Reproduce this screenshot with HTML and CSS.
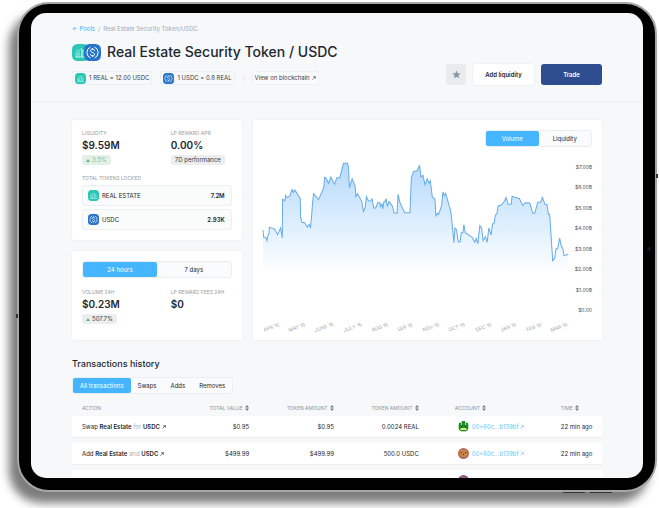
FILE: index.html
```
<!DOCTYPE html>
<html lang="en">
<head>
<meta charset="utf-8">
<title>Real Estate Security Token / USDC</title>
<link rel="stylesheet" href="styles.css">
</head>
<body>

<svg class="sprite" aria-hidden="true">
	<symbol id="real" viewBox="0 0 34 34">
		<rect width="34" height="34" rx="11" fill="#2cc7b4"/>
		<path d="M8 26V18h4v8zM14 26V13l5-4v17zM21 26V12l4 3v11zM6 26h22M7 16l6-6" fill="none" stroke="#b4f7ea" stroke-width="1.4"/>
	</symbol>
	<symbol id="usdc" viewBox="0 0 34 34">
		<rect width="34" height="34" rx="11" fill="#2775ca"/>
		<path d="M13 6a12 12 0 0 0 0 22M21 6a12 12 0 0 1 0 22" fill="none" stroke="#fff" stroke-width="2"/>
		<path d="M21 14c0-5-8-5-8-1 0 5 8 3 8 8 0 4-8 4-8-1M17 8v3M17 23v3" fill="none" stroke="#fff" stroke-width="2"/>
	</symbol>
	<symbol id="sort" viewBox="0 0 8 12">
		<path d="M4 0l4 5H0zM4 12L0 7h8z" fill="#777d84"/>
	</symbol>
	<symbol id="out" viewBox="0 0 10 10">
		<path d="M1 9l7-7M3 1.500h5.500V7" fill="none" stroke="currentColor" stroke-width="1.600"/>
	</symbol>
</svg>

<div class="tablet">
<div class="screen">

	<header class="header">
		<div>
			<nav class="breadcrumb"><a href="#">← Pools</a><span>/</span><span>Real Estate Security Token/USDC</span></nav>
			<div class="title">
				<span class="pair"><svg><use href="#real"/></svg><svg><use href="#usdc"/></svg></span>
				<h1>Real Estate Security Token / USDC</h1>
			</div>
			<div class="chips">
				<span class="chip"><svg class="coin"><use href="#real"/></svg>1 REAL = 12.00 USDC</span>
				<span class="chip"><svg class="coin"><use href="#usdc"/></svg>1 USDC = 0.8 REAL</span>
				<span class="divider"></span>
				<a class="chip chip-link" href="#">View on blockchain <svg class="out"><use href="#out"/></svg></a>
			</div>
		</div>
		<div class="actions">
			<button class="btn btn-star" aria-label="Favourite"><svg viewBox="0 0 20 20"><path d="M10 1l2.700 6 6.500.700-4.900 4.300 1.400 6.500L10 15.200l-5.700 3.300L5.700 12 .8 7.700 7.300 7z" fill="#8e969d"/></svg></button>
			<button class="btn btn-light">Add liquidity</button>
			<button class="btn btn-primary">Trade</button>
		</div>
	</header>

	<main class="content">
		<div class="overview">
			<section class="card">
				<div class="stats">
					<div>
						<h3 class="label">LIQUIDITY</h3>
						<p class="value">$9.59M</p>
						<span class="badge badge-up"><i class="up"></i>3.5%</span>
					</div>
					<div>
						<h3 class="label">LP REWARD APR</h3>
						<p class="value">0.00%</p>
						<span class="badge">7D performance</span>
					</div>
				</div>
				<h3 class="label label-locked">TOTAL TOKENS LOCKED</h3>
				<ul class="tokens">
					<li><svg class="coin"><use href="#real"/></svg>REAL ESTATE<b>7.2M</b></li>
					<li><svg class="coin"><use href="#usdc"/></svg>USDC<b>2.93K</b></li>
				</ul>
			</section>

			<section class="card">
				<div class="tabs">
					<button class="active">24 hours</button>
					<button>7 days</button>
				</div>
				<div class="stats stats-period">
					<div>
						<h3 class="label">VOLUME 24H</h3>
						<p class="value">$0.23M</p>
						<span class="badge"><i class="up"></i>507.7%</span>
					</div>
					<div>
						<h3 class="label">LP REWARD FEES 24H</h3>
						<p class="value">$0</p>
					</div>
				</div>
			</section>

			<section class="card chart">
				<div class="tabs">
					<button class="active">Volume</button>
					<button>Liquidity</button>
				</div>
				<div class="plot">
					<svg viewBox="0 0 918 459" preserveAspectRatio="none">
						<defs>
							<linearGradient id="fill" gradientUnits="userSpaceOnUse" x1="0" y1="0" x2="0" y2="340">
								<stop offset="0" stop-color="#b3d9fc"/>
								<stop offset="1" stop-color="#b3d9fc" stop-opacity="0"/>
							</linearGradient>
						</defs>
						<path fill="url(#fill)" d="M0 210L2 232H8L12 242L15 225L18 222L19 202L34 207L44 224L53 203L58 234L59 118L66 122L68 106L72 113L81 108L87 89L91 97L96 90L112 116L113 172L117 187L125 188L134 202L139 193L143 202L146 170L149 130L152 101L167 119L183 82L185 52L189 53L197 70L204 51L215 73L222 53H231L242 10H254L257 22L260 83L268 56L277 78L279 109L284 101L297 124L302 154L307 144L311 110L317 123L324 122L328 117L333 144H339L345 128L352 129L353 140L358 132L360 147L364 124H368L370 116L374 140L379 125L389 138L394 159H403L406 103L412 129L426 158H442L446 53L453 34H462L471 17L475 51L481 46L487 74L494 56L499 70L503 62L509 111L517 118L520 168L525 160L528 163L537 137L541 96L545 107L549 100L564 152L566 165L574 248L577 204L582 210L587 245H593L596 218H601L604 194L608 218L628 231L637 247L641 235L646 251L652 197L657 204L662 242L669 230L674 247L679 204L686 225L690 192L695 188L699 165L703 162L707 138L715 136L724 126L731 113L737 133H746L749 109L771 116L781 137L788 128L802 129L811 160H817L826 127H835L840 112L848 133L854 134L858 163H862L865 210L871 302L877 295L881 266H886L892 234L897 260L901 264L905 287L918 283V459H0z"/>
						<path class="line" d="M0 210L2 232H8L12 242L15 225L18 222L19 202L34 207L44 224L53 203L58 234L59 118L66 122L68 106L72 113L81 108L87 89L91 97L96 90L112 116L113 172L117 187L125 188L134 202L139 193L143 202L146 170L149 130L152 101L167 119L183 82L185 52L189 53L197 70L204 51L215 73L222 53H231L242 10H254L257 22L260 83L268 56L277 78L279 109L284 101L297 124L302 154L307 144L311 110L317 123L324 122L328 117L333 144H339L345 128L352 129L353 140L358 132L360 147L364 124H368L370 116L374 140L379 125L389 138L394 159H403L406 103L412 129L426 158H442L446 53L453 34H462L471 17L475 51L481 46L487 74L494 56L499 70L503 62L509 111L517 118L520 168L525 160L528 163L537 137L541 96L545 107L549 100L564 152L566 165L574 248L577 204L582 210L587 245H593L596 218H601L604 194L608 218L628 231L637 247L641 235L646 251L652 197L657 204L662 242L669 230L674 247L679 204L686 225L690 192L695 188L699 165L703 162L707 138L715 136L724 126L731 113L737 133H746L749 109L771 116L781 137L788 128L802 129L811 160H817L826 127H835L840 112L848 133L854 134L858 163H862L865 210L871 302L877 295L881 266H886L892 234L897 260L901 264L905 287L918 283"/>
					</svg>
					<div class="axis-y">
						<span>$7.00B</span><span>$6.00B</span><span>$5.00B</span><span>$4.00B</span>
						<span>$3.00B</span><span>$2.00B</span><span>$1.00B</span><span>$0.00</span>
					</div>
					<div class="axis-x">
						<span>APR 16</span><span>MAY 16</span><span>JUNE 16</span><span>JULY 16</span>
						<span>AUG 16</span><span>SEP 16</span><span>NOV 16</span><span>OCT 16</span>
						<span>DEC 16</span><span>JAN 16</span><span>FEB 16</span><span>MAR 16</span>
					</div>
				</div>
			</section>
		</div>

		<h2>Transactions history</h2>
		<div class="tabs tabs-filter">
			<button class="active">All transactions</button>
			<button>Swaps</button>
			<button>Adds</button>
			<button>Removes</button>
		</div>

		<table class="history">
			<thead>
				<tr>
					<th class="action">ACTION</th>
					<th class="total num">TOTAL VALUE <svg class="sort"><use href="#sort"/></svg></th>
					<th class="amount num">TOKEN AMOUNT <svg class="sort"><use href="#sort"/></svg></th>
					<th class="amount num">TOKEN AMOUNT <svg class="sort"><use href="#sort"/></svg></th>
					<th class="account">ACCOUNT <svg class="sort"><use href="#sort"/></svg></th>
					<th class="time">TIME <svg class="sort"><use href="#sort"/></svg></th>
				</tr>
			</thead>
			<tbody>
				<tr>
					<td class="action">Swap <b>Real Estate</b> <em>for</em> <b>USDC</b> <svg class="out"><use href="#out"/></svg></td>
					<td class="num">$0.95</td>
					<td class="num">$0.95</td>
					<td class="num">0.0024 REAL</td>
					<td class="account"><div class="wallet">
						<svg class="avatar" viewBox="0 0 11 11"><circle cx="5.500" cy="5.500" r="5.500" fill="#a9d8a6"/><path d="M1 2h2v2h1V0h3v4h1V2h2v7H9v1H2V9H1z" fill="#218a2c"/><path d="M3 5h1v1H3zM7 5h1v1H7z" fill="#0a3b10"/><path d="M3 7h5v1h1v1H2V8h1z" fill="#dcea7a"/></svg>
						<a href="#">00x60c...b139bf <svg class="out"><use href="#out"/></svg></a>
					</div></td>
					<td class="time">22 min ago</td>
				</tr>
				<tr>
					<td class="action">Add <b>Real Estate</b> <em>and</em> <b>USDC</b> <svg class="out"><use href="#out"/></svg></td>
					<td class="num">$499.99</td>
					<td class="num">$499.99</td>
					<td class="num">500.0 USDC</td>
					<td class="account"><div class="wallet">
						<svg class="avatar" viewBox="0 0 11 11"><circle cx="5.500" cy="5.500" r="5.500" fill="#b5685c"/><path d="M2 2h7v6H8v1H3V8H2z" fill="#c98443"/><path d="M3 4h1v1H3zM7 4h1v1H7zM5 6h1v1H5z" fill="#4b2a1c"/></svg>
						<a href="#">00x60c...b139bf <svg class="out"><use href="#out"/></svg></a>
					</div></td>
					<td class="time">22 min ago</td>
				</tr>
				<tr>
					<td class="action"></td>
					<td></td>
					<td></td>
					<td></td>
					<td class="account"><div class="wallet">
						<svg class="avatar" viewBox="0 0 11 11"><circle cx="5.500" cy="5.500" r="5.500" fill="#6a5fa8"/><path d="M3 1h5v3H3z" fill="#b5544c"/></svg>
					</div></td>
					<td class="time"></td>
				</tr>
			</tbody>
		</table>
	</main>

</div>
<i class="camera"></i>
<i class="port port-left"></i>
<i class="port port-right"></i>
<i class="key key-one"></i>
<i class="key key-two"></i>
</div>

</body>
</html>
```
FILE: styles.css
```
* {
	box-sizing: border-box;
}

body {
	margin: 0;
	padding: 2px 2px 16px 17px;
	height: 100vh;
	overflow: hidden;
	background: #fff;
	color: #23272e;
	font: 6px/8px Inter, "Liberation Sans", sans-serif;
}

h1, h2, h3, p, ul {
	margin: 0;
	padding: 0;
}

a {
	color: #47b5f5;
	text-decoration: none;
}

b {
	font-weight: 600;
}

button {
	margin: 0;
	padding: 0;
	border: 0;
	background: none;
	color: inherit;
	font: inherit;
}

.sprite {
	display: none;
}

/* Tablet frame */

.tablet {
	position: relative;
	height: 100%;
	padding: 9px 12px 12px;
	border: 2px solid #a6a6a6;
	border-radius: 32px;
	background: #000;
	box-shadow: -8px 11px 10px #7c7c7c;
}

.screen {
	height: 100%;
	overflow: hidden;
	border-radius: 15px;
	background: #f6f8fa;
}

.camera {
	position: absolute;
	right: 4px;
	top: 50%;
	width: 4px;
	height: 4px;
	border-radius: 50%;
	background: #15181b;
}

.port {
	position: absolute;
	width: 2px;
	height: 4px;
	background: #333;
}

.port-left {
	left: -3px;
	bottom: 172px;
}

.port-right {
	right: -3px;
	top: 170px;
}

.key {
	position: absolute;
	bottom: -3px;
	width: 22px;
	height: 1px;
	background: #333;
}

.key-one {
	right: 70px;
}

.key-two {
	right: 43px;
}

/* Header */

.header {
	display: flex;
	justify-content: space-between;
	align-items: flex-end;
	padding: 12px 41px 16px;
	border-bottom: 1px solid #edf0f2;
}

.breadcrumb {
	display: flex;
	gap: 3px;
	color: #a5abb1;
}

.title {
	display: flex;
	align-items: center;
	gap: 6px;
	margin: 10px 0;
}

h1 {
	font-size: 14px;
	font-weight: 500;
	line-height: 18px;
}

.pair {
	display: flex;
}

.pair svg {
	width: 17px;
	height: 17px;
}

.pair svg + svg {
	margin-left: -5px;
}

.chips {
	display: flex;
	align-items: center;
	gap: 8px;
}

.chip {
	display: flex;
	align-items: center;
	gap: 3px;
	height: 14px;
	padding: 0 2px;
	border: 1px solid #edf0f2;
	border-radius: 2px;
	color: #3b4047;
}

.chip-link {
	gap: 2px;
	background: #fafbfc;
}

.coin {
	width: 11px;
	height: 11px;
}

.out {
	width: 4px;
	height: 4px;
}

.divider {
	width: 1px;
	height: 5px;
	background: #e6e9ec;
}

.actions {
	display: flex;
	gap: 7px;
}

.btn {
	width: 61px;
	height: 21px;
	border-radius: 3px;
	font-weight: 600;
}

.btn-star {
	display: flex;
	align-items: center;
	justify-content: center;
	width: 20px;
	background: #e9ecef;
}

.btn-star svg {
	width: 9px;
	height: 9px;
}

.btn-light {
	background: #fff;
	box-shadow: 0 0 2px #dce0e4;
}

.btn-primary {
	background: #2d4d8f;
	color: #fff;
}

/* Cards */

.content {
	padding: 18px 41px 0;
}

.overview {
	display: grid;
	grid-template-columns: 17fr 35fr;
	grid-template-rows: auto 1fr;
	gap: 11px;
}

.card {
	padding: 10px;
	border-radius: 2px;
	background: #fff;
	box-shadow: 0 0 2px #e4e8eb;
}

.chart {
	grid-column: 2;
	grid-row: 1 / 3;
}

.stats {
	display: grid;
	grid-template-columns: 89fr 61fr;
}

.stats-period {
	margin-top: 11px;
}

.label {
	color: #989da3;
	font-size: 5px;
	font-weight: 400;
	line-height: 6px;
	white-space: nowrap;
}

.label-locked {
	margin: 10px 0 4px;
}

.value {
	margin: 3px 0 4px;
	font-size: 10px;
	font-weight: 600;
	line-height: 12px;
}

.badge {
	display: inline-flex;
	align-items: center;
	height: 10px;
	padding: 0 4px;
	border-radius: 3px;
	background: #ebedee;
	color: #3b4047;
	vertical-align: top;
	white-space: nowrap;
}

.badge-up {
	background: #e4efe8;
	color: #7cc192;
}

.up {
	margin-right: 2px;
	border: 2px solid transparent;
	border-top: 0;
	border-bottom: 3px solid #5bbb7b;
}

.tokens {
	display: grid;
	gap: 3px;
	list-style: none;
}

.tokens li {
	display: flex;
	align-items: center;
	gap: 3px;
	height: 21px;
	padding: 0 6px 0 5px;
	border: 1px solid #edeff1;
	border-radius: 3px;
	background: #fafbfb;
}

.tokens b {
	margin-left: auto;
}

.tabs {
	display: flex;
	height: 17px;
	border: 1px solid #ebeef0;
	border-radius: 3px;
	background: #fafbfc;
}

.tabs button {
	flex: 1;
}

.tabs .active {
	border-radius: 2px;
	background: #45b5ff;
	color: #fff;
}

/* Chart */

.chart .tabs {
	width: 107px;
	margin-left: auto;
}

.plot {
	display: grid;
	grid-template-columns: 1fr 24px;
	margin-top: 13px;
}

.plot svg {
	width: 100%;
	height: 153px;
	overflow: visible;
}

.line {
	fill: none;
	stroke: #65aae8;
	stroke-width: 1px;
	vector-effect: non-scaling-stroke;
}

.axis-y {
	display: flex;
	flex-direction: column;
	justify-content: space-between;
	padding-top: 4px;
	color: #4b5056;
	font-size: 5px;
	line-height: 6px;
	text-align: right;
}

.axis-x {
	display: flex;
	justify-content: space-between;
	margin-top: 11px;
	color: #a3a7ab;
	font-size: 5px;
	line-height: 6px;
	white-space: nowrap;
}

.axis-x span {
	transform: rotate(-20deg);
}

/* Transactions */

h2 {
	margin-top: 18px;
	font-size: 9px;
	font-weight: 500;
	line-height: 12px;
}

.tabs-filter {
	width: fit-content;
	margin-top: 7px;
}

.tabs-filter button {
	flex: none;
	padding: 0 7px;
}

.history {
	width: 100%;
	table-layout: fixed;
	border-spacing: 0 5px;
}

.history th, .history td {
	padding: 0;
	text-align: left;
	white-space: nowrap;
}

.history th {
	padding-top: 6px;
	color: #8d9399;
	font-size: 5px;
	font-weight: 400;
	line-height: 6px;
}

.history td {
	height: 22px;
	border-bottom: 1px solid #eceff1;
	background: #fff;
}

.history .num {
	padding-right: 3px;
	text-align: right;
}

.history .action {
	width: 22%;
	padding-left: 10px;
}

.history .total {
	width: 12%;
}

.history .amount {
	width: 16%;
}

.history .account {
	width: 20%;
	padding-left: 33px;
}

.history .time {
	padding-left: 33px;
}

.history em {
	color: #a9aeb3;
	font-style: normal;
}

.sort {
	width: 4px;
	height: 6px;
	margin-left: 1px;
	vertical-align: top;
}

.wallet {
	display: flex;
	align-items: center;
	gap: 3px;
	margin-left: 3px;
}

.wallet a {
	color: #74c4f7;
}

.avatar {
	width: 11px;
	height: 11px;
}
```
